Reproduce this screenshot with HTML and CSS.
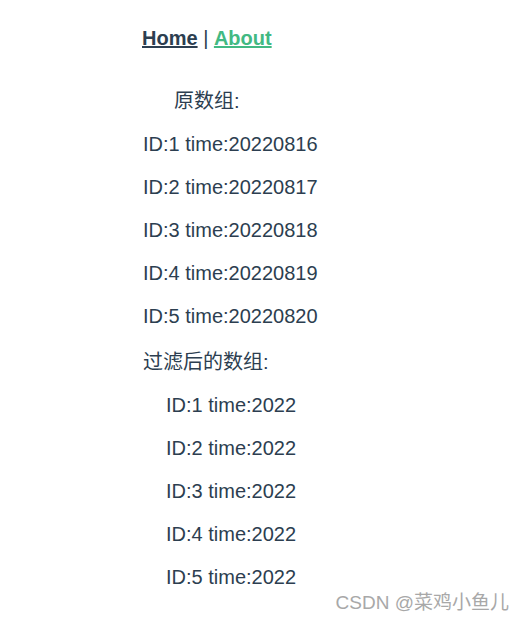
FILE: index.html
```html
<!DOCTYPE html>
<html lang="zh">
<head>
<meta charset="utf-8">
<title>App</title>
<link rel="stylesheet" href="styles.css">
</head>
<body>
<div class="app">
  <nav class="nav">
    <a class="nav-link" href="#/">Home</a> | <a class="nav-link active" href="#/about">About</a>
  </nav>
  <div class="section">
    <p class="title indent-a">原数组:</p>
    <p class="row">ID:1 time:20220816</p>
    <p class="row">ID:2 time:20220817</p>
    <p class="row">ID:3 time:20220818</p>
    <p class="row">ID:4 time:20220819</p>
    <p class="row">ID:5 time:20220820</p>
  </div>
  <div class="section filtered">
    <p class="title">过滤后的数组:</p>
    <p class="row indent-b">ID:1 time:2022</p>
    <p class="row indent-b">ID:2 time:2022</p>
    <p class="row indent-b">ID:3 time:2022</p>
    <p class="row indent-b">ID:4 time:2022</p>
    <p class="row indent-b">ID:5 time:2022</p>
  </div>
</div>
<div class="watermark">CSDN @菜鸡小鱼儿</div>
</body>
</html>
```
FILE: styles.css
```css
html, body {
  margin: 0;
  padding: 0;
  background: #ffffff;
}
body {
  font-family: "Liberation Sans", Arial, "Noto Sans CJK SC", sans-serif;
  color: #2c3e50;
  font-size: 20px;
  line-height: 23px;
  -webkit-font-smoothing: antialiased;
}
.app {
  padding: 27px 0 0 142px;
}
.nav {
  line-height: 23px;
  height: 23px;
}
.nav-link {
  color: #2c3e50;
  font-weight: bold;
  text-decoration: underline;
}
.nav-link.active {
  color: #42b983;
}
.section {
  display: flex;
  flex-direction: column;
  gap: 20px;
  padding-left: 1px;
}
.section p {
  margin: 0;
}
.section:first-of-type {
  margin-top: 40px;
}
.filtered {
  margin-top: 23px;
}
.indent-a {
  padding-left: 31px;
}
.indent-b {
  padding-left: 23px;
}
.watermark {
  position: absolute;
  right: 15px;
  top: 591px;
  font-family: "Liberation Sans", Arial, "Noto Sans CJK SC", sans-serif;
  font-size: 19px;
  line-height: 24px;
  color: #a8a8a8;
}
```
